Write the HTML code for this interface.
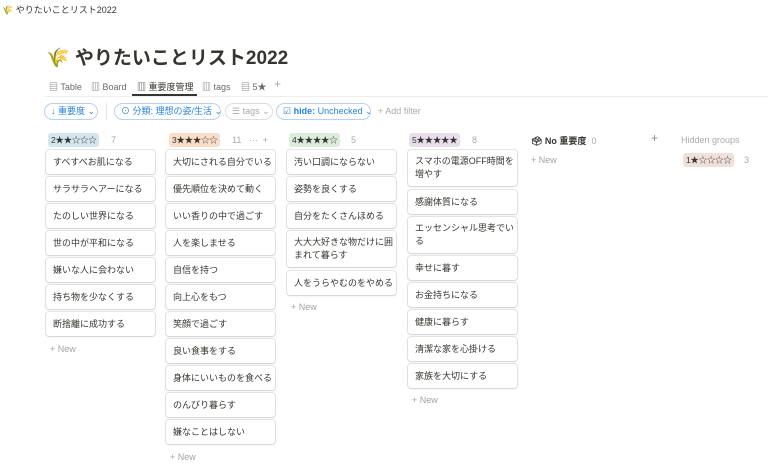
<!DOCTYPE html>
<html><head><meta charset="utf-8"><style>
*{box-sizing:border-box;margin:0;padding:0}
body{width:768px;height:475px;background:#fff;font-family:"Liberation Sans","Noto Sans CJK JP",sans-serif;color:#37352f;position:relative;overflow:hidden}
.a{position:absolute;white-space:nowrap}
.card{position:absolute;width:109px;height:24px;background:#fff;border-radius:3px;box-shadow:0 0 0 1px rgba(15,15,15,.1),0 1px 2px rgba(15,15,15,.1);font-size:9px;padding:6px 7px;line-height:12px;white-space:nowrap;overflow:hidden}
.card.t{height:36px;padding-top:5px;line-height:13px}
.tag{position:absolute;height:14px;font-size:8.5px;line-height:14px;padding:0 3px;border-radius:3px;white-space:nowrap;letter-spacing:-0.3px}
.cnt{position:absolute;font-size:9px;color:#aaa;white-space:nowrap}
.new{position:absolute;font-size:9px;color:#a5a39f}
.pill{position:absolute;top:103px;height:17px;border:1px solid #b5d2ef;border-radius:9px;font-size:9px;line-height:15px;color:#2383e2;padding:0 6px;white-space:nowrap;overflow:hidden}
.tab{position:absolute;top:80px;font-size:9px;color:#6b6a66;white-space:nowrap}
</style></head><body>
<div class="a" style="left:2px;top:3px;font-size:9px;color:#37352f">🌾 やりたいことリスト2022</div>
<div class="a" style="left:46px;top:43px;font-size:19px;font-weight:bold">🌾 やりたいことリスト2022</div>
<div class="tab" style="left:49px">▤ Table</div>
<div class="tab" style="left:91px">▥ Board</div>
<div class="tab" style="left:137px;color:#37352f">▥ 重要度管理</div>
<div class="tab" style="left:202px">▥ tags</div>
<div class="tab" style="left:241px">▤ 5★</div>
<div class="tab" style="left:274px;font-size:12px;top:77px;color:#aaa">+</div>
<div class="a" style="left:132px;top:94px;width:65px;height:2px;background:#37352f"></div>
<div class="a" style="left:44px;top:96px;width:724px;height:1px;background:#eee"></div>
<div class="pill" style="left:44px;width:54px">↓ 重要度 ⌄</div>
<div class="a" style="left:106px;top:103px;width:1px;height:17px;background:#e5e5e5"></div>
<div class="pill" style="left:114px;width:107px">⊙ 分類: 理想の姿/生活 ⌄</div>
<div class="pill" style="left:225px;width:48px;border-color:#ddd;color:#aaa">☰ tags ⌄</div>
<div class="pill" style="left:276px;width:95px">☑ <b>hide:</b> Unchecked ⌄</div>
<div class="a" style="left:378px;top:106px;font-size:9px;color:#aaa">+ Add filter</div>

<div class="tag" style="left:48px;top:133px;background:#d3e5ef">2★★☆☆☆</div><div class="cnt" style="left:111px;top:135px">7</div>
<div class="tag" style="left:169px;top:133px;background:#fadec9">3★★★☆☆</div><div class="cnt" style="left:232px;top:135px">11 &nbsp;&nbsp;··· &nbsp;+</div>
<div class="tag" style="left:289px;top:133px;background:#dbeddb">4★★★★☆</div><div class="cnt" style="left:351px;top:135px">5</div>
<div class="tag" style="left:409px;top:133px;background:#e8deee">5★★★★★</div><div class="cnt" style="left:472px;top:135px">8</div>
<div class="a" style="left:531px;top:134px;font-size:9px;font-weight:bold">🗳 No 重要度 <span style="font-weight:normal;color:#aaa">&nbsp;0</span></div>
<div class="a" style="left:651px;top:131px;font-size:12px;color:#888">+</div>
<div class="a" style="left:681px;top:135px;font-size:9px;color:#aaa">Hidden groups</div>
<div class="new" style="left:531px;top:155px">+ New</div>
<div class="tag" style="left:683px;top:153px;background:#f0e0dc">1★☆☆☆☆</div><div class="cnt" style="left:744px;top:155px">3</div>

<div class="card" style="left:46px;top:150px">すべすべお肌になる</div>
<div class="card" style="left:46px;top:177px">サラサラヘアーになる</div>
<div class="card" style="left:46px;top:204px">たのしい世界になる</div>
<div class="card" style="left:46px;top:231px">世の中が平和になる</div>
<div class="card" style="left:46px;top:258px">嫌いな人に会わない</div>
<div class="card" style="left:46px;top:285px">持ち物を少なくする</div>
<div class="card" style="left:46px;top:312px">断捨離に成功する</div>
<div class="new" style="left:50px;top:344px">+ New</div>

<div class="card" style="left:166px;top:150px">大切にされる自分でいる</div>
<div class="card" style="left:166px;top:177px">優先順位を決めて動く</div>
<div class="card" style="left:166px;top:204px">いい香りの中で過ごす</div>
<div class="card" style="left:166px;top:231px">人を楽しませる</div>
<div class="card" style="left:166px;top:258px">自信を持つ</div>
<div class="card" style="left:166px;top:285px">向上心をもつ</div>
<div class="card" style="left:166px;top:312px">笑顔で過ごす</div>
<div class="card" style="left:166px;top:339px">良い食事をする</div>
<div class="card" style="left:166px;top:366px">身体にいいものを食べる</div>
<div class="card" style="left:166px;top:393px">のんびり暮らす</div>
<div class="card" style="left:166px;top:420px">嫌なことはしない</div>
<div class="new" style="left:170px;top:452px">+ New</div>

<div class="card" style="left:287px;top:150px">汚い口調にならない</div>
<div class="card" style="left:287px;top:177px">姿勢を良くする</div>
<div class="card" style="left:287px;top:204px">自分をたくさんほめる</div>
<div class="card t" style="left:287px;top:231px">大大大好きな物だけに囲<br>まれて暮らす</div>
<div class="card" style="left:287px;top:271px">人をうらやむのをやめる</div>
<div class="new" style="left:291px;top:302px">+ New</div>

<div class="card t" style="left:408px;top:150px">スマホの電源OFF時間を<br>増やす</div>
<div class="card" style="left:408px;top:190px">感謝体質になる</div>
<div class="card t" style="left:408px;top:217px">エッセンシャル思考でい<br>る</div>
<div class="card" style="left:408px;top:256px">幸せに暮す</div>
<div class="card" style="left:408px;top:283px">お金持ちになる</div>
<div class="card" style="left:408px;top:310px">健康に暮らす</div>
<div class="card" style="left:408px;top:337px">清潔な家を心掛ける</div>
<div class="card" style="left:408px;top:364px">家族を大切にする</div>
<div class="new" style="left:412px;top:395px">+ New</div>
</body></html>
